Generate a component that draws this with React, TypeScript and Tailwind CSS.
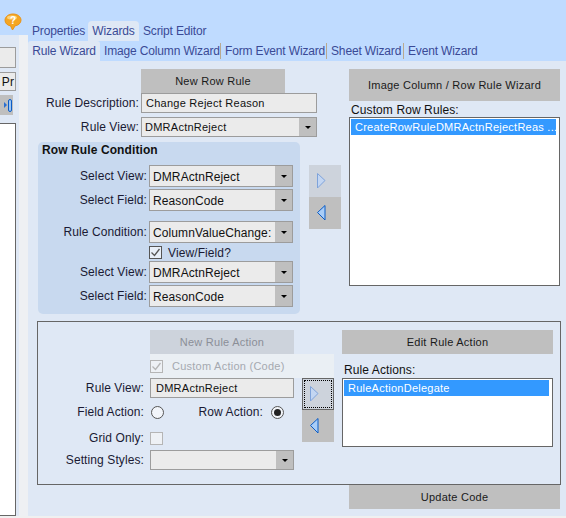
import React from 'react';

const labelClass = 'text-right text-[#1a1a33] whitespace-nowrap shrink-0';

function Arrow({ dir, faded }: { dir: 'left' | 'right'; faded?: boolean }) {
  const points = dir === 'right' ? '0.5,0.5 8,7.500 0.5,15' : '8,0.5 0.5,7.500 8,15';
  return (
    <svg width="9" height="16" viewBox="0 0 9 16">
      <polygon
        points={points}
        fill={faded ? '#c3d6f2' : '#a9cdf7'}
        stroke={faded ? '#7ea3db' : '#0b5cc6'}
        strokeWidth="1"
      />
    </svg>
  );
}

function ArrowButtons({ focus }: { focus?: boolean }) {
  return (
    <div className="flex flex-col w-8">
      <div className="h-8 bg-[#cdd3dc] flex items-center pl-2 relative">
        {focus && <div className="absolute inset-0 border border-[#666] p-px"><div className="w-full h-full border border-dotted border-black" /></div>}
        <Arrow dir="right" faded />
      </div>
      <div className="h-8 bg-[#bfbfbf] flex items-center pl-2">
        <Arrow dir="left" />
      </div>
    </div>
  );
}

function SelectBox({ value, width, small }: { value: string; width: string; small?: boolean }) {
  return (
    <div className={`${width} ${small ? 'h-5 text-[11px] tracking-[0.25px] leading-[18px]' : 'h-[22px] leading-[22px]'} flex bg-[#ebebeb] border border-[#9c9c9c] shrink-0`}>
      <div className="flex-1 min-w-0 overflow-hidden whitespace-nowrap pl-[3px] text-[#111]">{value}</div>
      <div className="w-[17px] bg-[#bfbfbf] flex items-center justify-center">
        <div className="w-0 h-0 border-x-[3px] border-x-transparent border-t-[3px] border-t-black" />
      </div>
    </div>
  );
}

function Row({ label, labelWidth, children, className }: { label: string; labelWidth: string; children: React.ReactNode; className?: string }) {
  return (
    <div className={`flex items-center ${className ?? ''}`}>
      <div className={`${labelWidth} ${labelClass}`}>{label}</div>
      {children}
    </div>
  );
}

function Check({ on, dim }: { on?: boolean; dim?: boolean }) {
  return (
    <div className={`w-[13px] h-[13px] border shrink-0 flex items-center justify-center ${dim ? 'border-[#b5b5b5] bg-[#eef1f5]' : 'border-[#555] bg-[#e8eff8]'}`}>
      {on && (
        <svg width="11" height="11" viewBox="0 0 11 11">
          <polyline points="1.5,5.5 4.5,8.5 9.5,2" fill="none" stroke={dim ? '#b5b5b5' : '#555'} strokeWidth="1.3" />
        </svg>
      )}
    </div>
  );
}

function Radio({ on }: { on?: boolean }) {
  return (
    <div className="w-[13px] h-[13px] rounded-full border border-[#555] bg-[#f2f5fa] flex items-center justify-center shrink-0">
      {on && <div className="w-[7px] h-[7px] rounded-full bg-[#222]" />}
    </div>
  );
}

function GrayButton({ children, className }: { children: React.ReactNode; className: string }) {
  return <div className={`bg-[#bfbfbf] flex items-center justify-center text-[#1a1a1a] text-[11px] tracking-[0.25px] ${className}`}>{children}</div>;
}

function HelpIcon() {
  return (
    <svg width="18" height="18" viewBox="0 0 18 18">
      <path d="M9 1C4.5 1 1 3.6 1 7.200c0 3 2.400 5.200 5.600 5.700L8.500 17l2.600-4.200C14.500 12.300 17 10 17 7.200 17 3.600 13.500 1 9 1z" fill="#f5a623" stroke="#e8941a" />
      <ellipse cx="8" cy="4.500" rx="5" ry="2" fill="#fbd27a" />
      <text x="9" y="11" textAnchor="middle" fontSize="10" fontWeight="700" fill="#fff">?</text>
    </svg>
  );
}

function Sidebar() {
  return (
    <div className="w-7 shrink-0 flex flex-col">
      <div className="h-[35px] pl-[4px] pt-[13px] overflow-visible">
        <HelpIcon />
      </div>
      <div className="flex-1 flex min-h-0">
        <div className="w-[19px] bg-[#dfe8f5] pt-3 flex flex-col overflow-hidden">
          <div className="w-4 h-[21px] bg-[#ebebeb] border-y border-r border-[#9c9c9c]" />
          <div className="w-4 h-[19px] mt-1 bg-[#ebebeb] border-y border-r border-[#9c9c9c] flex justify-end items-center pr-px text-[#111] overflow-hidden whitespace-nowrap">
            Pr
          </div>
          <div className="w-[13px] h-5 mt-1 bg-[#bfbfbf] flex items-center justify-end gap-px pr-[1px]">
            <div className="w-0 h-0 border-y-[3px] border-y-transparent border-l-[3px] border-l-[#2a6fd0]" />
            <div className="w-[4px] h-[13px] rounded-[2px] bg-[#9cc6f5] border border-[#0b5cc6]" />
          </div>
          <div className="w-4 flex-1 mt-2 bg-white border-y border-r border-[#666]" />
        </div>
        <div className="w-[9px] bg-[#eef0f3]" />
      </div>
    </div>
  );
}

function Tabs() {
  return (
    <div className="tracking-[-0.15px]">
      <div className="h-5 flex text-[#3a4a96] leading-[20px] mt-[21px]">
        <div className="pl-1 w-[60px]">Properties</div>
        <div className="w-[51px] bg-[#dfe8f5] rounded-t-[4px] text-center">Wizards</div>
        <div className="pl-1">Script Editor</div>
      </div>
      <div className="h-5 flex text-[#3a4a96] leading-[20px]">
        <div className="w-[72px] bg-[#dfe8f5] rounded-t-[3px] text-center">Rule Wizard</div>
        <div className="pl-1 w-[121px] border-r border-[#b9a98f] h-4 mt-[2px] leading-[16px] whitespace-nowrap">Image Column Wizard</div>
        <div className="pl-1 w-[106px] border-r border-[#b9a98f] h-4 mt-[2px] leading-[16px] whitespace-nowrap">Form Event Wizard</div>
        <div className="pl-1 w-[77px] border-r border-[#b9a98f] h-4 mt-[2px] leading-[16px] whitespace-nowrap">Sheet Wizard</div>
        <div className="pl-1 h-4 mt-[2px] leading-[16px] whitespace-nowrap">Event Wizard</div>
      </div>
    </div>
  );
}

function ConditionPanel() {
  return (
    <div className="mt-[5px] ml-[10px] w-[262px] h-[172px] bg-[#c8d9ef] rounded-[5px] pt-[1px]">
      <div className="pl-1 font-bold h-[22px] leading-[14px] text-[#111]">Row Rule Condition</div>
      <div className="flex flex-col">
        <Row label="Select View:" labelWidth="w-[109px] mr-[2px]"><SelectBox value="DMRActnReject" width="w-[144px]" /></Row>
        <Row label="Select Field:" labelWidth="w-[109px] mr-[2px]" className="mt-[2px]"><SelectBox value="ReasonCode" width="w-[144px]" /></Row>
        <Row label="Rule Condition:" labelWidth="w-[109px] mr-[2px]" className="mt-[10px]"><SelectBox value="ColumnValueChange:" width="w-[144px]" /></Row>
        <div className="flex items-center h-[18px] pl-[111px] pt-[1px] gap-[6px] text-[#1a1a33]">
          <Check on />
          <span>View/Field?</span>
        </div>
        <Row label="Select View:" labelWidth="w-[109px] mr-[2px]"><SelectBox value="DMRActnReject" width="w-[144px]" /></Row>
        <Row label="Select Field:" labelWidth="w-[109px] mr-[2px]" className="mt-[2px]"><SelectBox value="ReasonCode" width="w-[144px]" /></Row>
      </div>
    </div>
  );
}

function TopSection() {
  return (
    <div className="flex h-[245px] mt-2">
      <div className="w-[281px] shrink-0 flex flex-col">
        <GrayButton className="ml-[113px] w-[144px] h-6">New Row Rule</GrayButton>
        <Row label="Rule Description:" labelWidth="w-[111px] mr-[2px]">
          <div className="w-[176px] h-5 shrink-0 bg-[#ebebeb] border border-[#9c9c9c] pl-1 leading-[18px] text-[11px] tracking-[0.25px] text-[#111]">Change Reject Reason</div>
        </Row>
        <Row label="Rule View:" labelWidth="w-[111px] mr-[2px]" className="mt-1">
          <SelectBox value="DMRActnReject" width="w-[176px]" small />
        </Row>
        <ConditionPanel />
      </div>
      <div className="w-8 shrink-0 mt-24">
        <ArrowButtons />
      </div>
      <div className="ml-2 w-[211px] flex flex-col">
        <GrayButton className="h-8">Image Column / Row Rule Wizard</GrayButton>
        <div className="h-4 pl-[2px] leading-[18px] text-[#111]">Custom Row Rules:</div>
        <div className="h-[169px] bg-white border border-[#666] p-px">
          <div className="h-4 mr-[2px] bg-[#3399ff] text-white pl-[4px] leading-[16px] text-[11px] tracking-[0.25px] whitespace-nowrap overflow-hidden">CreateRowRuleDMRActnRejectReas ...</div>
        </div>
      </div>
    </div>
  );
}

function ActionBox() {
  return (
    <div className="ml-[9px] mt-[7px] w-[524px] h-[164px] border border-[#666] flex pt-2">
      <div className="w-[296px] shrink-0 flex flex-col">
        <div className="ml-[112px] w-[144px] h-6 bg-[#cdd3dc] flex items-center justify-center text-[#8b8f98] text-[11px] tracking-[0.25px]">New Rule Action</div>
        <div className="ml-[112px] w-[184px] h-6 bg-[#eaeff4] flex items-center gap-[9px] text-[#a5a9b0] text-[11px] tracking-[0.25px]">
          <Check on dim />
          <span>Custom Action (Code)</span>
        </div>
        <div className="flex">
          <div className="w-[256px] shrink-0 flex flex-col">
            <Row label="Rule View:" labelWidth="w-[106px] mr-[6px]">
              <div className="w-[144px] h-5 shrink-0 bg-[#ebebeb] border border-[#9c9c9c] pl-[5px] leading-[18px] text-[11px] tracking-[0.25px] text-[#111]">DMRActnReject</div>
            </Row>
            <div className="flex items-center h-5 mt-1">
              <div className={`w-[106px] mr-[7px] ${labelClass}`}>Field Action:</div>
              <Radio />
              <div className={`w-[99px] mr-[8px] ${labelClass}`}>Row Action:</div>
              <Radio on />
            </div>
            <div className="flex items-center h-5 mt-[6px]">
              <div className={`w-[106px] mr-[6px] ${labelClass}`}>Grid Only:</div>
              <Check dim />
            </div>
            <Row label="Setting Styles:" labelWidth="w-[106px] mr-[6px]" className="mt-[2px]">
              <SelectBox value="" width="w-[144px]" small />
            </Row>
          </div>
          <div className="ml-2"><ArrowButtons focus /></div>
        </div>
      </div>
      <div className="ml-2 w-[211px] flex flex-col">
        <GrayButton className="h-6">Edit Rule Action</GrayButton>
        <div className="h-6 pl-[2px] leading-[32px] text-[#111]">Rule Actions:</div>
        <div className="h-[69px] bg-white border border-[#666] p-px">
          <div className="h-4 mr-[2px] bg-[#3399ff] text-white pl-[4px] leading-[16px] text-[11px] tracking-[0.25px]">RuleActionDelegate</div>
        </div>
      </div>
    </div>
  );
}

export default function App() {
  return (
    <div className="w-[566px] h-[518px] overflow-hidden bg-[#bfdbff] flex flex-col text-[12px] font-['Liberation_Sans',Arial,sans-serif] tracking-[0.1px]">
      <div className="h-[516px] flex min-h-0">
        <Sidebar />
        <div className="flex-1 flex flex-col min-w-0">
          <Tabs />
          <div className="flex-1 bg-[#dfe8f5] flex flex-col">
            <TopSection />
            <ActionBox />
            <GrayButton className="ml-[321px] w-[211px] h-6">Update Code</GrayButton>
          </div>
        </div>
      </div>
      <div className="h-[2px] bg-[#f0f0f0]" />
    </div>
  );
}
